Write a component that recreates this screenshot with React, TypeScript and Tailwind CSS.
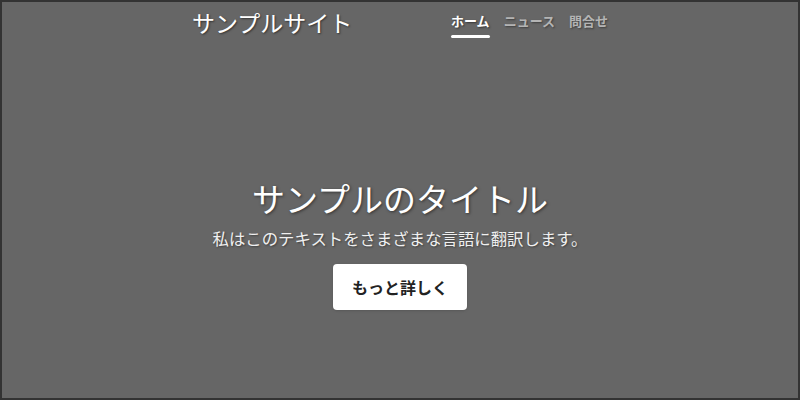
export default function App() {
  const navItems = [
    { label: 'ホーム', active: true },
    { label: 'ニュース', active: false },
    { label: '問合せ', active: false },
  ]

  return (
    <div
      className="h-[400px] w-full box-border border-2 border-[#333333] bg-[#666666] flex flex-col"
      style={{ fontFamily: '"Noto Sans CJK JP", "Noto Sans", sans-serif' }}
    >
      <header className="h-[40px] shrink-0">
        <div className="w-[416px] mx-auto h-full flex justify-between items-stretch">
          <div className="flex items-center text-[23px] leading-8 text-white [text-shadow:1px_1px_2px_rgba(0,0,0,0.5)]">
            サンプルサイト
          </div>
          <nav className="flex gap-[14px]">
            {navItems.map((item) => (
              <a
                key={item.label}
                href="#"
                className={
                  item.active
                    ? 'flex flex-col pt-[9px] text-[13px] leading-5 font-bold text-white [text-shadow:1px_1px_2px_rgba(0,0,0,0.5)]'
                    : 'flex flex-col pt-[9px] text-[13px] leading-5 font-bold text-[#b4b4b4] [text-shadow:1px_1px_2px_rgba(0,0,0,0.4)]'
                }
              >
                <span>{item.label}</span>
                {item.active && <span className="mt-[4px] h-[3px] bg-white rounded-sm" />}
              </a>
            ))}
          </nav>
        </div>
      </header>

      <main className="flex flex-col items-center mt-[136px] text-center">
        <h1 className="text-[33px] leading-10 font-normal text-white [text-shadow:1px_1px_3px_rgba(0,0,0,0.5)]">
          サンプルのタイトル
        </h1>
        <p className="mt-[8px] text-[16.4px] leading-6 text-[#f0f0f0] [text-shadow:1px_1px_2px_rgba(0,0,0,0.4)]">
          私はこのテキストをさまざまな言語に翻訳します。
        </p>
        <button className="mt-[14px] h-[46px] px-[19px] bg-white rounded text-[16px] font-bold text-[#222222] shadow-sm">
          もっと詳しく
        </button>
      </main>
    </div>
  )
}
